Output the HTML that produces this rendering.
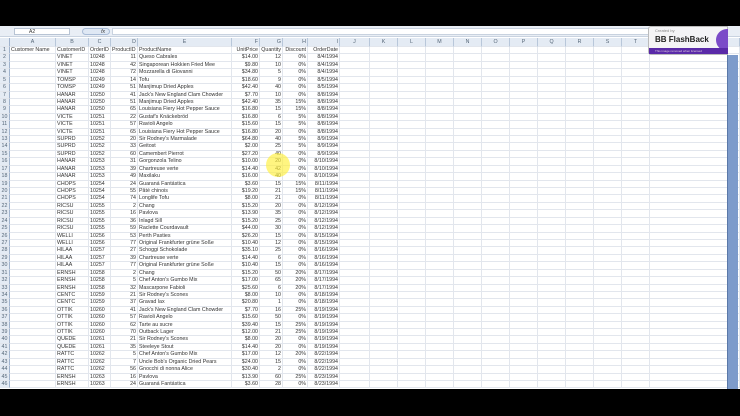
<!DOCTYPE html><html><head><meta charset="utf-8"><style>
*{margin:0;padding:0;box-sizing:border-box}
body{width:740px;height:416px;background:#000;overflow:hidden;position:relative;font-family:"Liberation Sans",sans-serif;color:#333}
#sheet{position:absolute;left:0;top:26px;width:740px;height:363px;background:#fff;overflow:hidden}
#fb{position:absolute;left:0;top:0;width:740px;height:11px;background:#e9eef5;border-bottom:1px solid #c9d3e0}
#nb{position:absolute;left:14px;top:2px;width:56px;height:7px;background:#fff;border:1px solid #b8c4d4;font-size:5px;line-height:6px;padding-left:14px}
#fx{position:absolute;left:82px;top:2px;width:28px;height:7px;background:#dfe8f4;border:1px solid #a8bbd6;border-radius:4px;font-size:5px;line-height:6px;text-align:right;padding-right:4px;font-style:italic}
#fi{position:absolute;left:112px;top:2px;width:540px;height:7px;background:#fff;border:1px solid #c8d2df}
.r{display:grid;grid-template-columns:10px 46px 33px 22px 27px 94px 28px 23px 25px 32px 30px repeat(10,28px) 90px;height:7.43px;font-size:5.3px;line-height:7.2px;white-space:nowrap}
.r>span{border-right:1px solid #e2e6ed;border-bottom:1px solid #e2e6ed;overflow:hidden;padding:0 1px}
.r>span:first-child{background:#e4ebf4;color:#567;text-align:center;border-right:1px solid #9fb2cc}
.h{height:9px;line-height:9px}
.h>span{background:#e4ebf4;text-align:center;color:#567;border-right:1px solid #b8c7da}
.r>span:nth-child(5),.r>span:nth-child(7),.r>span:nth-child(8),.r>span:nth-child(9),.r>span:nth-child(10){text-align:right}
#grid{position:absolute;left:0;top:12px}
#wm{position:absolute;left:648px;top:0;width:80px;height:29px;background:#f4f4f6;border:1px solid #bbb;border-radius:3px 0 0 3px}
#wm .c{position:absolute;left:6px;top:1px;font-size:4px;color:#888}
#wm .b{position:absolute;left:6px;top:8px;font-size:8px;font-weight:bold;color:#222}
#wm .p{position:absolute;left:0;bottom:0;width:79px;height:6px;background:#5a2aa8;font-size:3px;color:#dcd;line-height:6px;padding-left:6px}
#wm .o{position:absolute;right:-1px;top:2px;width:12px;height:22px;border-radius:12px 0 0 12px;background:#7b4bc8}
#sb{position:absolute;left:727px;top:29px;width:11px;height:334px;background:#7d9bcb;border-left:1px solid #5a78a8}
#hl{position:absolute;left:266px;top:127px;width:24px;height:24px;border-radius:50%;background:rgba(255,240,60,.65)}
</style></head><body>
<div id="sheet">
<div id="fb"><div id="nb">A2</div><div id="fx">fx</div><div id="fi"></div></div>
<div id="grid">
<div class="r h"><span></span><span>A</span><span>B</span><span>C</span><span>D</span><span>E</span><span>F</span><span>G</span><span>H</span><span>I</span><span>J</span><span>K</span><span>L</span><span>M</span><span>N</span><span>O</span><span>P</span><span>Q</span><span>R</span><span>S</span><span>T</span><span></span></div>
<div class="r"><span>1</span><span>Customer Name</span><span>CustomerID</span><span>OrderID</span><span style="text-align:left">ProductID</span><span>ProductName</span><span>UnitPrice</span><span>Quantity</span><span>Discount</span><span>OrderDate</span><span></span><span></span><span></span><span></span><span></span><span></span><span></span><span></span><span></span><span></span><span></span><span></span></div>
<div class="r"><span>2</span><span></span><span>VINET</span><span>10248</span><span>11</span><span>Queso Cabrales</span><span>$14.00</span><span>12</span><span>0%</span><span>8/4/1994</span><span></span><span></span><span></span><span></span><span></span><span></span><span></span><span></span><span></span><span></span><span></span><span></span></div>
<div class="r"><span>3</span><span></span><span>VINET</span><span>10248</span><span>42</span><span>Singaporean Hokkien Fried Mee</span><span>$9.80</span><span>10</span><span>0%</span><span>8/4/1994</span><span></span><span></span><span></span><span></span><span></span><span></span><span></span><span></span><span></span><span></span><span></span><span></span></div>
<div class="r"><span>4</span><span></span><span>VINET</span><span>10248</span><span>72</span><span>Mozzarella di Giovanni</span><span>$34.80</span><span>5</span><span>0%</span><span>8/4/1994</span><span></span><span></span><span></span><span></span><span></span><span></span><span></span><span></span><span></span><span></span><span></span><span></span></div>
<div class="r"><span>5</span><span></span><span>TOMSP</span><span>10249</span><span>14</span><span>Tofu</span><span>$18.60</span><span>9</span><span>0%</span><span>8/5/1994</span><span></span><span></span><span></span><span></span><span></span><span></span><span></span><span></span><span></span><span></span><span></span><span></span></div>
<div class="r"><span>6</span><span></span><span>TOMSP</span><span>10249</span><span>51</span><span>Manjimup Dried Apples</span><span>$42.40</span><span>40</span><span>0%</span><span>8/5/1994</span><span></span><span></span><span></span><span></span><span></span><span></span><span></span><span></span><span></span><span></span><span></span><span></span></div>
<div class="r"><span>7</span><span></span><span>HANAR</span><span>10250</span><span>41</span><span>Jack's New England Clam Chowder</span><span>$7.70</span><span>10</span><span>0%</span><span>8/8/1994</span><span></span><span></span><span></span><span></span><span></span><span></span><span></span><span></span><span></span><span></span><span></span><span></span></div>
<div class="r"><span>8</span><span></span><span>HANAR</span><span>10250</span><span>51</span><span>Manjimup Dried Apples</span><span>$42.40</span><span>35</span><span>15%</span><span>8/8/1994</span><span></span><span></span><span></span><span></span><span></span><span></span><span></span><span></span><span></span><span></span><span></span><span></span></div>
<div class="r"><span>9</span><span></span><span>HANAR</span><span>10250</span><span>65</span><span>Louisiana Fiery Hot Pepper Sauce</span><span>$16.80</span><span>15</span><span>15%</span><span>8/8/1994</span><span></span><span></span><span></span><span></span><span></span><span></span><span></span><span></span><span></span><span></span><span></span><span></span></div>
<div class="r"><span>10</span><span></span><span>VICTE</span><span>10251</span><span>22</span><span>Gustaf's Knäckebröd</span><span>$16.80</span><span>6</span><span>5%</span><span>8/8/1994</span><span></span><span></span><span></span><span></span><span></span><span></span><span></span><span></span><span></span><span></span><span></span><span></span></div>
<div class="r"><span>11</span><span></span><span>VICTE</span><span>10251</span><span>57</span><span>Ravioli Angelo</span><span>$15.60</span><span>15</span><span>5%</span><span>8/8/1994</span><span></span><span></span><span></span><span></span><span></span><span></span><span></span><span></span><span></span><span></span><span></span><span></span></div>
<div class="r"><span>12</span><span></span><span>VICTE</span><span>10251</span><span>65</span><span>Louisiana Fiery Hot Pepper Sauce</span><span>$16.80</span><span>20</span><span>0%</span><span>8/8/1994</span><span></span><span></span><span></span><span></span><span></span><span></span><span></span><span></span><span></span><span></span><span></span><span></span></div>
<div class="r"><span>13</span><span></span><span>SUPRD</span><span>10252</span><span>20</span><span>Sir Rodney's Marmalade</span><span>$64.80</span><span>40</span><span>5%</span><span>8/9/1994</span><span></span><span></span><span></span><span></span><span></span><span></span><span></span><span></span><span></span><span></span><span></span><span></span></div>
<div class="r"><span>14</span><span></span><span>SUPRD</span><span>10252</span><span>33</span><span>Geitost</span><span>$2.00</span><span>25</span><span>5%</span><span>8/9/1994</span><span></span><span></span><span></span><span></span><span></span><span></span><span></span><span></span><span></span><span></span><span></span><span></span></div>
<div class="r"><span>15</span><span></span><span>SUPRD</span><span>10252</span><span>60</span><span>Camembert Pierrot</span><span>$27.20</span><span>40</span><span>0%</span><span>8/9/1994</span><span></span><span></span><span></span><span></span><span></span><span></span><span></span><span></span><span></span><span></span><span></span><span></span></div>
<div class="r"><span>16</span><span></span><span>HANAR</span><span>10253</span><span>31</span><span>Gorgonzola Telino</span><span>$10.00</span><span>20</span><span>0%</span><span>8/10/1994</span><span></span><span></span><span></span><span></span><span></span><span></span><span></span><span></span><span></span><span></span><span></span><span></span></div>
<div class="r"><span>17</span><span></span><span>HANAR</span><span>10253</span><span>39</span><span>Chartreuse verte</span><span>$14.40</span><span>42</span><span>0%</span><span>8/10/1994</span><span></span><span></span><span></span><span></span><span></span><span></span><span></span><span></span><span></span><span></span><span></span><span></span></div>
<div class="r"><span>18</span><span></span><span>HANAR</span><span>10253</span><span>49</span><span>Maxilaku</span><span>$16.00</span><span>40</span><span>0%</span><span>8/10/1994</span><span></span><span></span><span></span><span></span><span></span><span></span><span></span><span></span><span></span><span></span><span></span><span></span></div>
<div class="r"><span>19</span><span></span><span>CHOPS</span><span>10254</span><span>24</span><span>Guaraná Fantástica</span><span>$3.60</span><span>15</span><span>15%</span><span>8/11/1994</span><span></span><span></span><span></span><span></span><span></span><span></span><span></span><span></span><span></span><span></span><span></span><span></span></div>
<div class="r"><span>20</span><span></span><span>CHOPS</span><span>10254</span><span>55</span><span>Pâté chinois</span><span>$19.20</span><span>21</span><span>15%</span><span>8/11/1994</span><span></span><span></span><span></span><span></span><span></span><span></span><span></span><span></span><span></span><span></span><span></span><span></span></div>
<div class="r"><span>21</span><span></span><span>CHOPS</span><span>10254</span><span>74</span><span>Longlife Tofu</span><span>$8.00</span><span>21</span><span>0%</span><span>8/11/1994</span><span></span><span></span><span></span><span></span><span></span><span></span><span></span><span></span><span></span><span></span><span></span><span></span></div>
<div class="r"><span>22</span><span></span><span>RICSU</span><span>10255</span><span>2</span><span>Chang</span><span>$15.20</span><span>20</span><span>0%</span><span>8/12/1994</span><span></span><span></span><span></span><span></span><span></span><span></span><span></span><span></span><span></span><span></span><span></span><span></span></div>
<div class="r"><span>23</span><span></span><span>RICSU</span><span>10255</span><span>16</span><span>Pavlova</span><span>$13.90</span><span>35</span><span>0%</span><span>8/12/1994</span><span></span><span></span><span></span><span></span><span></span><span></span><span></span><span></span><span></span><span></span><span></span><span></span></div>
<div class="r"><span>24</span><span></span><span>RICSU</span><span>10255</span><span>36</span><span>Inlagd Sill</span><span>$15.20</span><span>25</span><span>0%</span><span>8/12/1994</span><span></span><span></span><span></span><span></span><span></span><span></span><span></span><span></span><span></span><span></span><span></span><span></span></div>
<div class="r"><span>25</span><span></span><span>RICSU</span><span>10255</span><span>59</span><span>Raclette Courdavault</span><span>$44.00</span><span>30</span><span>0%</span><span>8/12/1994</span><span></span><span></span><span></span><span></span><span></span><span></span><span></span><span></span><span></span><span></span><span></span><span></span></div>
<div class="r"><span>26</span><span></span><span>WELLI</span><span>10256</span><span>53</span><span>Perth Pasties</span><span>$26.20</span><span>15</span><span>0%</span><span>8/15/1994</span><span></span><span></span><span></span><span></span><span></span><span></span><span></span><span></span><span></span><span></span><span></span><span></span></div>
<div class="r"><span>27</span><span></span><span>WELLI</span><span>10256</span><span>77</span><span>Original Frankfurter grüne Soße</span><span>$10.40</span><span>12</span><span>0%</span><span>8/15/1994</span><span></span><span></span><span></span><span></span><span></span><span></span><span></span><span></span><span></span><span></span><span></span><span></span></div>
<div class="r"><span>28</span><span></span><span>HILAA</span><span>10257</span><span>27</span><span>Schoggi Schokolade</span><span>$35.10</span><span>25</span><span>0%</span><span>8/16/1994</span><span></span><span></span><span></span><span></span><span></span><span></span><span></span><span></span><span></span><span></span><span></span><span></span></div>
<div class="r"><span>29</span><span></span><span>HILAA</span><span>10257</span><span>39</span><span>Chartreuse verte</span><span>$14.40</span><span>6</span><span>0%</span><span>8/16/1994</span><span></span><span></span><span></span><span></span><span></span><span></span><span></span><span></span><span></span><span></span><span></span><span></span></div>
<div class="r"><span>30</span><span></span><span>HILAA</span><span>10257</span><span>77</span><span>Original Frankfurter grüne Soße</span><span>$10.40</span><span>15</span><span>0%</span><span>8/16/1994</span><span></span><span></span><span></span><span></span><span></span><span></span><span></span><span></span><span></span><span></span><span></span><span></span></div>
<div class="r"><span>31</span><span></span><span>ERNSH</span><span>10258</span><span>2</span><span>Chang</span><span>$15.20</span><span>50</span><span>20%</span><span>8/17/1994</span><span></span><span></span><span></span><span></span><span></span><span></span><span></span><span></span><span></span><span></span><span></span><span></span></div>
<div class="r"><span>32</span><span></span><span>ERNSH</span><span>10258</span><span>5</span><span>Chef Anton's Gumbo Mix</span><span>$17.00</span><span>65</span><span>20%</span><span>8/17/1994</span><span></span><span></span><span></span><span></span><span></span><span></span><span></span><span></span><span></span><span></span><span></span><span></span></div>
<div class="r"><span>33</span><span></span><span>ERNSH</span><span>10258</span><span>32</span><span>Mascarpone Fabioli</span><span>$25.60</span><span>6</span><span>20%</span><span>8/17/1994</span><span></span><span></span><span></span><span></span><span></span><span></span><span></span><span></span><span></span><span></span><span></span><span></span></div>
<div class="r"><span>34</span><span></span><span>CENTC</span><span>10259</span><span>21</span><span>Sir Rodney's Scones</span><span>$8.00</span><span>10</span><span>0%</span><span>8/18/1994</span><span></span><span></span><span></span><span></span><span></span><span></span><span></span><span></span><span></span><span></span><span></span><span></span></div>
<div class="r"><span>35</span><span></span><span>CENTC</span><span>10259</span><span>37</span><span>Gravad lax</span><span>$20.80</span><span>1</span><span>0%</span><span>8/18/1994</span><span></span><span></span><span></span><span></span><span></span><span></span><span></span><span></span><span></span><span></span><span></span><span></span></div>
<div class="r"><span>36</span><span></span><span>OTTIK</span><span>10260</span><span>41</span><span>Jack's New England Clam Chowder</span><span>$7.70</span><span>16</span><span>25%</span><span>8/19/1994</span><span></span><span></span><span></span><span></span><span></span><span></span><span></span><span></span><span></span><span></span><span></span><span></span></div>
<div class="r"><span>37</span><span></span><span>OTTIK</span><span>10260</span><span>57</span><span>Ravioli Angelo</span><span>$15.60</span><span>50</span><span>0%</span><span>8/19/1994</span><span></span><span></span><span></span><span></span><span></span><span></span><span></span><span></span><span></span><span></span><span></span><span></span></div>
<div class="r"><span>38</span><span></span><span>OTTIK</span><span>10260</span><span>62</span><span>Tarte au sucre</span><span>$39.40</span><span>15</span><span>25%</span><span>8/19/1994</span><span></span><span></span><span></span><span></span><span></span><span></span><span></span><span></span><span></span><span></span><span></span><span></span></div>
<div class="r"><span>39</span><span></span><span>OTTIK</span><span>10260</span><span>70</span><span>Outback Lager</span><span>$12.00</span><span>21</span><span>25%</span><span>8/19/1994</span><span></span><span></span><span></span><span></span><span></span><span></span><span></span><span></span><span></span><span></span><span></span><span></span></div>
<div class="r"><span>40</span><span></span><span>QUEDE</span><span>10261</span><span>21</span><span>Sir Rodney's Scones</span><span>$8.00</span><span>20</span><span>0%</span><span>8/19/1994</span><span></span><span></span><span></span><span></span><span></span><span></span><span></span><span></span><span></span><span></span><span></span><span></span></div>
<div class="r"><span>41</span><span></span><span>QUEDE</span><span>10261</span><span>35</span><span>Steeleye Stout</span><span>$14.40</span><span>20</span><span>0%</span><span>8/19/1994</span><span></span><span></span><span></span><span></span><span></span><span></span><span></span><span></span><span></span><span></span><span></span><span></span></div>
<div class="r"><span>42</span><span></span><span>RATTC</span><span>10262</span><span>5</span><span>Chef Anton's Gumbo Mix</span><span>$17.00</span><span>12</span><span>20%</span><span>8/22/1994</span><span></span><span></span><span></span><span></span><span></span><span></span><span></span><span></span><span></span><span></span><span></span><span></span></div>
<div class="r"><span>43</span><span></span><span>RATTC</span><span>10262</span><span>7</span><span>Uncle Bob's Organic Dried Pears</span><span>$24.00</span><span>15</span><span>0%</span><span>8/22/1994</span><span></span><span></span><span></span><span></span><span></span><span></span><span></span><span></span><span></span><span></span><span></span><span></span></div>
<div class="r"><span>44</span><span></span><span>RATTC</span><span>10262</span><span>56</span><span>Gnocchi di nonna Alice</span><span>$30.40</span><span>2</span><span>0%</span><span>8/22/1994</span><span></span><span></span><span></span><span></span><span></span><span></span><span></span><span></span><span></span><span></span><span></span><span></span></div>
<div class="r"><span>45</span><span></span><span>ERNSH</span><span>10263</span><span>16</span><span>Pavlova</span><span>$13.90</span><span>60</span><span>25%</span><span>8/23/1994</span><span></span><span></span><span></span><span></span><span></span><span></span><span></span><span></span><span></span><span></span><span></span><span></span></div>
<div class="r"><span>46</span><span></span><span>ERNSH</span><span>10263</span><span>24</span><span>Guaraná Fantástica</span><span>$3.60</span><span>28</span><span>0%</span><span>8/23/1994</span><span></span><span></span><span></span><span></span><span></span><span></span><span></span><span></span><span></span><span></span><span></span><span></span></div>
</div>
<div id="sb"></div>
<div id="wm"><div class="c">Created by</div><div class="b">BB FlashBack</div><div class="o"></div><div class="p">This image removed when licensed</div></div>
<div id="hl"></div>
</div>
</body></html>
